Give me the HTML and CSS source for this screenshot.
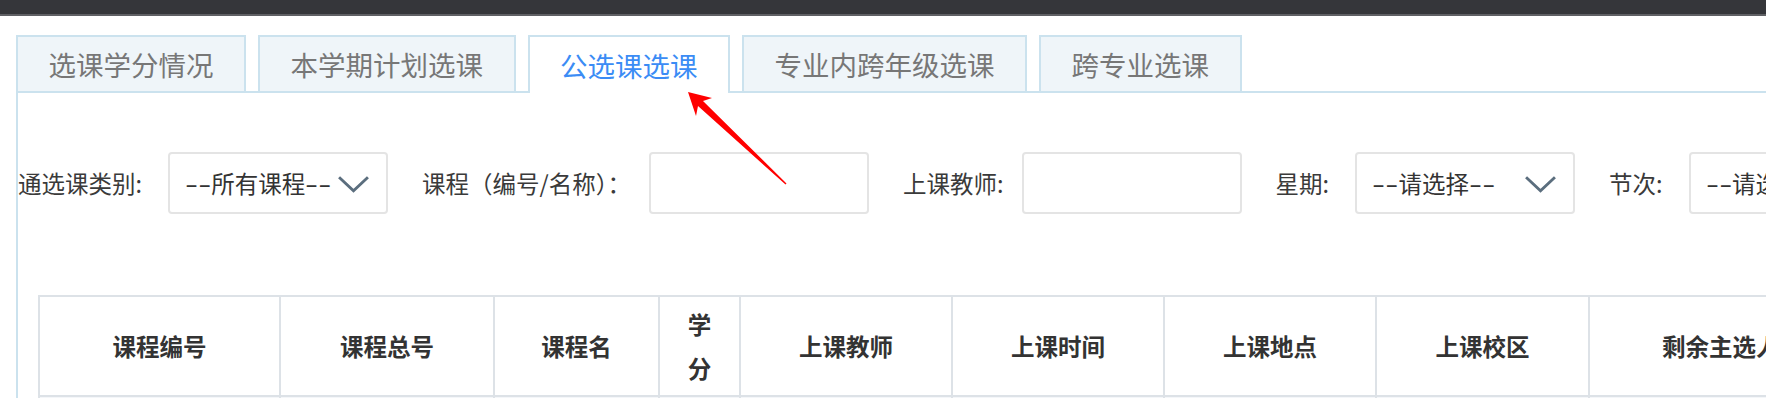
FILE: index.html
```html
<!DOCTYPE html>
<html lang="zh-CN">
<head>
  <meta charset="UTF-8" />
  <title>公选课选课</title>
  <link rel="stylesheet" href="styles.css">
</head>
<body>

  <div class="topbar"></div>

  <!-- Tabs -->
  <div class="tabs">
    <div class="tab">选课学分情况</div>
    <div class="tab">本学期计划选课</div>
    <div class="tab active">公选课选课</div>
    <div class="tab">专业内跨年级选课</div>
    <div class="tab">跨专业选课</div>
  </div>

  <div class="panel">

    <!-- Search filters -->
    <div class="filters">
      <div class="field">
        <span class="label">通选课类别:</span>
        <div class="select">
          <span class="select-text"><span class="dash">--</span>所有课程<span class="dash">--</span></span>
          <svg class="chevron" viewBox="0 0 32 18"><polyline points="2,2 16,15 30,2" /></svg>
        </div>
      </div>
      <div class="field tight">
        <span class="label">课程（编号/名称）：</span>
        <div class="input"></div>
      </div>
      <div class="field tight">
        <span class="label">上课教师:</span>
        <div class="input"></div>
      </div>
      <div class="field">
        <span class="label">星期:</span>
        <div class="select">
          <span class="select-text"><span class="dash">--</span>请选择<span class="dash">--</span></span>
          <svg class="chevron" viewBox="0 0 32 18"><polyline points="2,2 16,15 30,2" /></svg>
        </div>
      </div>
      <div class="field">
        <span class="label">节次:</span>
        <div class="select">
          <span class="select-text"><span class="dash">--</span>请选择<span class="dash">--</span></span>
          <svg class="chevron" viewBox="0 0 32 18"><polyline points="2,2 16,15 30,2" /></svg>
        </div>
      </div>
    </div>

    <!-- Course list -->
    <table class="course-table">
      <colgroup>
        <col style="width: 241px">
        <col style="width: 214px">
        <col style="width: 165px">
        <col style="width: 81px">
        <col style="width: 212px">
        <col style="width: 212px">
        <col style="width: 212px">
        <col style="width: 213px">
        <col style="width: 287px">
      </colgroup>
      <thead>
        <tr>
          <th>课程编号</th>
          <th>课程总号</th>
          <th>课程名</th>
          <th>学分</th>
          <th>上课教师</th>
          <th>上课时间</th>
          <th>上课地点</th>
          <th>上课校区</th>
          <th>剩余主选人数</th>
        </tr>
      </thead>
      <tbody>
        <tr>
          <td></td><td></td><td></td><td></td><td></td><td></td><td></td><td></td><td></td>
        </tr>
      </tbody>
    </table>

  </div>

  <!-- Red annotation arrow pointing at the active tab -->
  <svg class="arrow" viewBox="0 0 1766 398">
    <polygon points="688,92 712,98 703,101 786.5,183.5 785.5,184.5 698,106 696,116" />
  </svg>

</body>
</html>
```

FILE: styles.css
```css
* { box-sizing: border-box; }
html, body { margin: 0; height: 100%; overflow: hidden; }
body {
  position: relative;
  background: #fff;
  font-family: "Noto Sans CJK SC", "Noto Sans", sans-serif;
  color: #333;
}

.topbar {
  height: 16px;
  background: #35363a;
  border-bottom: 2px solid #5f6064;
}

/* tabs */
.tabs {
  display: flex;
  gap: 12px;
  margin-top: 19px;
  padding-left: 16px;
  align-items: flex-end;
}

.tab {
  height: 56px;
  padding: 0 30.5px;
  display: flex;
  align-items: center;
  background: #eff5f9;
  border: 2px solid #cbe2ee;
  border-bottom: none;
  font-size: 27.5px;
  color: #777;
  white-space: nowrap;
}

.tab.active {
  background: #fff;
  color: #3b8cf5;
  height: 58px;
  margin-bottom: -2px;
  position: relative;
  z-index: 1;
}

.panel {
  border-top: 2px solid #cbe2ee;
  border-left: 2px solid #cbe2ee;
  margin-left: 16px;
  height: 400px;
  padding-top: 59px;
}

/* filters */
.filters {
  display: flex;
  gap: 34px;
  white-space: nowrap;
}

.field {
  display: flex;
  align-items: center;
  gap: 26px;
  flex-shrink: 0;
}

.field.tight { gap: 18px; }

.label {
  font-size: 23.5px;
  color: #3a3a3a;
}

.select, .input {
  width: 220px;
  height: 62px;
  border: 2px solid #e4e4e4;
  border-radius: 4px;
  background: #fff;
  position: relative;
}

.select {
  display: flex;
  align-items: center;
  padding-left: 15px;
  overflow: hidden;
}

.select-text {
  font-size: 23.5px;
  color: #333;
}

.dash {
  display: inline-block;
  transform: scaleX(1.6);
  margin: 0 5px;
}

.chevron {
  position: absolute;
  right: 16px;
  top: 21px;
  width: 33px;
  height: 19px;
  fill: none;
  stroke: #5b6e7e;
  stroke-width: 2.8;
}

/* table */
.course-table {
  margin-top: 81px;
  margin-left: 20px;
  border-collapse: collapse;
  table-layout: fixed;
  width: 1837px;
}

.course-table th {
  border: 2px solid #dde2e7;
  padding: 5px 20px;
  line-height: 44px;
  font-size: 23.5px;
  font-weight: bold;
  color: #333;
  text-align: center;
  white-space: normal;
}

.course-table td {
  border: 2px solid #dde2e7;
  height: 50px;
  background: #f4f6f9;
}

/* annotation */
.arrow {
  position: absolute;
  top: 0;
  left: 0;
  width: 1766px;
  height: 398px;
  pointer-events: none;
  z-index: 5;
}

.arrow polygon { fill: #ff0000; }
```
